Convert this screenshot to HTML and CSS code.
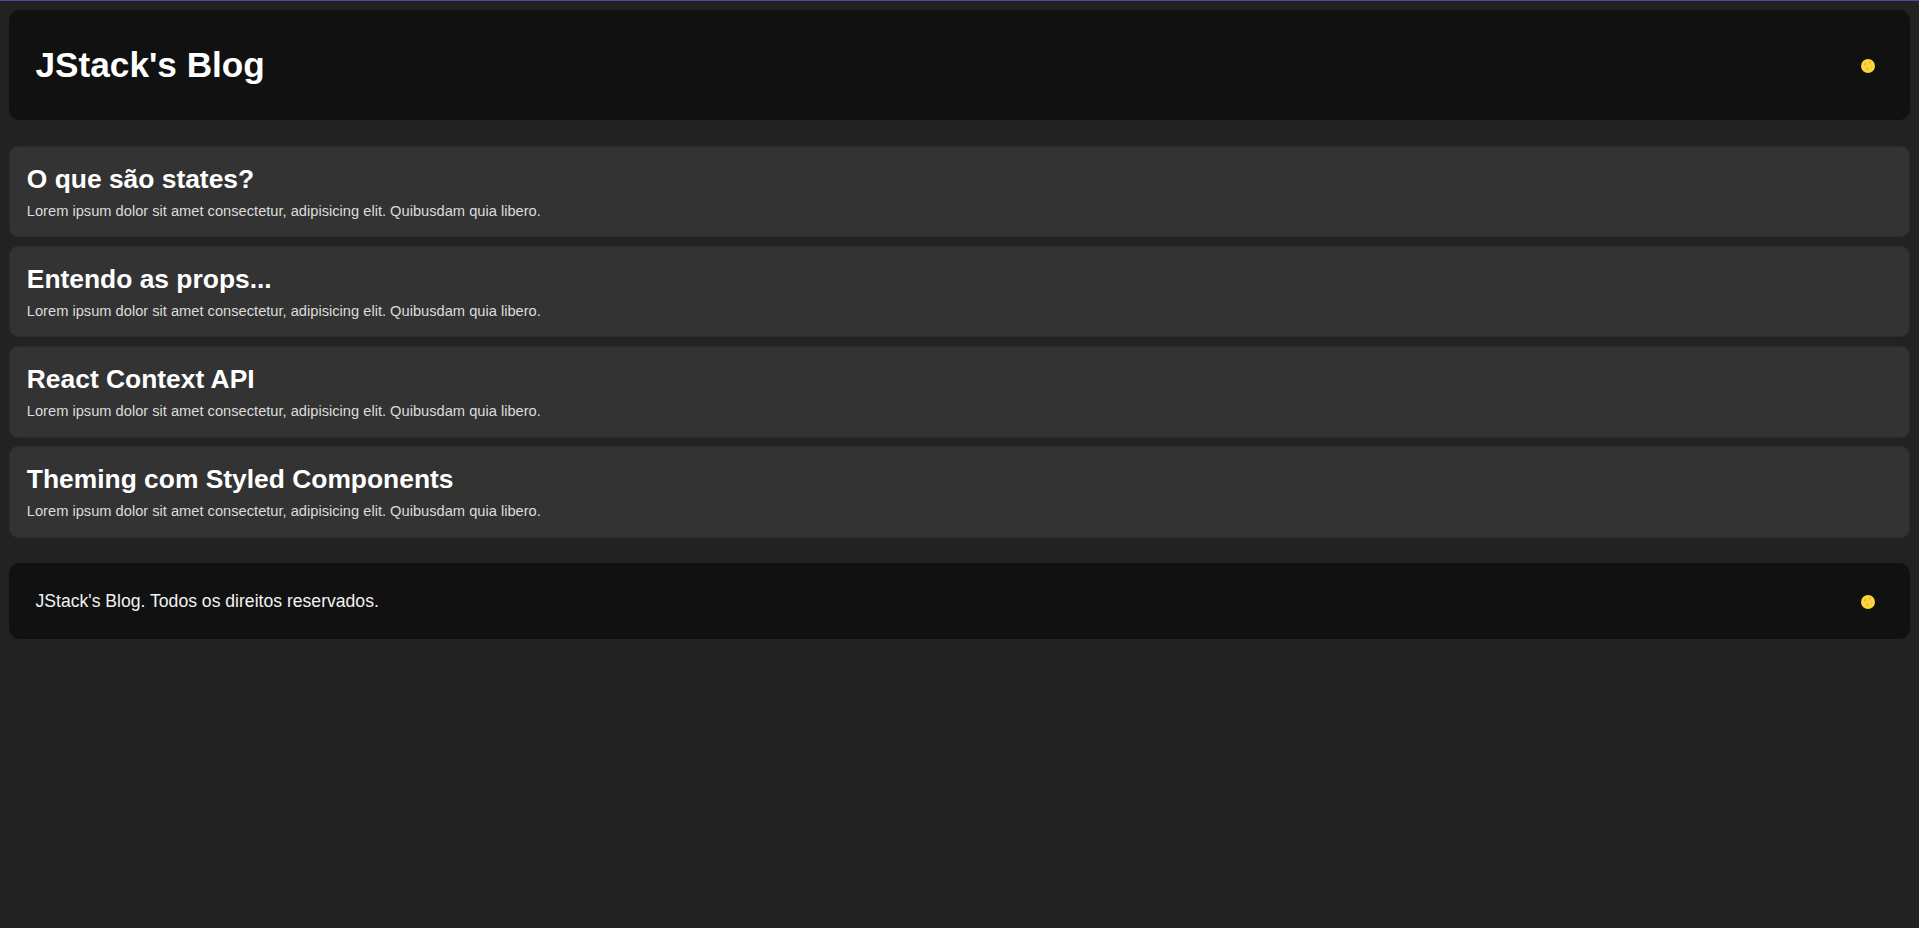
FILE: index.html
```html
<!DOCTYPE html>
<html lang="pt-BR">
<head>
<meta charset="utf-8">
<title>JStack's Blog</title>
<link rel="stylesheet" href="styles.css">
</head>
<body>
<div class="topbar"></div>
<div class="page">
  <header class="header">
    <h1 class="title">JStack's Blog</h1>
    <button class="theme-toggle" aria-label="Alternar tema">
      <svg width="14" height="14" viewBox="0 0 14 14"><circle cx="7" cy="7" r="7" fill="#fcd53f"/><circle cx="4" cy="5.2" r="1.1" fill="#eab42c"/><circle cx="9" cy="3.4" r="1" fill="#eab42c"/><circle cx="6.5" cy="10.2" r="1.1" fill="#eab42c"/><circle cx="10.3" cy="8" r="0.8" fill="#eab42c"/></svg>
    </button>
  </header>
  <main class="posts">
    <article class="post">
      <h2 class="post-title">O que são states?</h2>
      <small class="post-desc">Lorem ipsum dolor sit amet consectetur, adipisicing elit. Quibusdam quia libero.</small>
    </article>
    <article class="post">
      <h2 class="post-title">Entendo as props...</h2>
      <small class="post-desc">Lorem ipsum dolor sit amet consectetur, adipisicing elit. Quibusdam quia libero.</small>
    </article>
    <article class="post">
      <h2 class="post-title">React Context API</h2>
      <small class="post-desc">Lorem ipsum dolor sit amet consectetur, adipisicing elit. Quibusdam quia libero.</small>
    </article>
    <article class="post">
      <h2 class="post-title">Theming com Styled Components</h2>
      <small class="post-desc">Lorem ipsum dolor sit amet consectetur, adipisicing elit. Quibusdam quia libero.</small>
    </article>
  </main>
  <footer class="footer">
    <span class="footer-text">JStack's Blog. Todos os direitos reservados.</span>
    <button class="theme-toggle" aria-label="Alternar tema">
      <svg width="14" height="14" viewBox="0 0 14 14"><circle cx="7" cy="7" r="7" fill="#fcd53f"/><circle cx="4" cy="5.2" r="1.1" fill="#eab42c"/><circle cx="9" cy="3.4" r="1" fill="#eab42c"/><circle cx="6.5" cy="10.2" r="1.1" fill="#eab42c"/><circle cx="10.3" cy="8" r="0.8" fill="#eab42c"/></svg>
    </button>
  </footer>
</div>
</body>
</html>
```
FILE: styles.css
```css
* { box-sizing: border-box; }

html, body {
  margin: 0;
  background: #222222;
}

body {
  font-family: "Liberation Sans", Arial, sans-serif;
  color: #ffffff;
  min-height: 100vh;
}

.topbar {
  height: 1px;
  background: #4b4a9c;
}

.page {
  display: flex;
  flex-direction: column;
  gap: 25.5px;
  padding: 9px 9px;
}

.header {
  height: 110px;
  background: #111111;
  border-radius: 11px;
  display: flex;
  align-items: center;
  justify-content: space-between;
  padding: 0 35px 0 26.5px;
}

.title {
  margin: 0;
  font-size: 35.2px;
  font-weight: 700;
  color: #ffffff;
}

.theme-toggle {
  background: none;
  border: 0;
  padding: 0;
  margin: 2px 0 0;
  width: 14px;
  height: 14px;
  display: flex;
  cursor: pointer;
}

.posts {
  display: flex;
  flex-direction: column;
  gap: 8.5px;
}

.post {
  background: #333333;
  border: 1px solid #2c2c2c;
  border-radius: 9px;
  padding: 17px 18px 17.5px 16.8px;
}

.post-title {
  margin: 0 0 8.2px;
  font-size: 26.4px;
  font-weight: 700;
  color: #ffffff;
}

.post-desc {
  display: block;
  font-size: 14.67px;
  color: #dcdcdc;
}

.footer {
  height: 76px;
  background: #111111;
  border-radius: 11px;
  display: flex;
  align-items: center;
  justify-content: space-between;
  padding: 0 35px 0 26.5px;
  font-size: 17.6px;
  color: #f2f2f2;
}
```
